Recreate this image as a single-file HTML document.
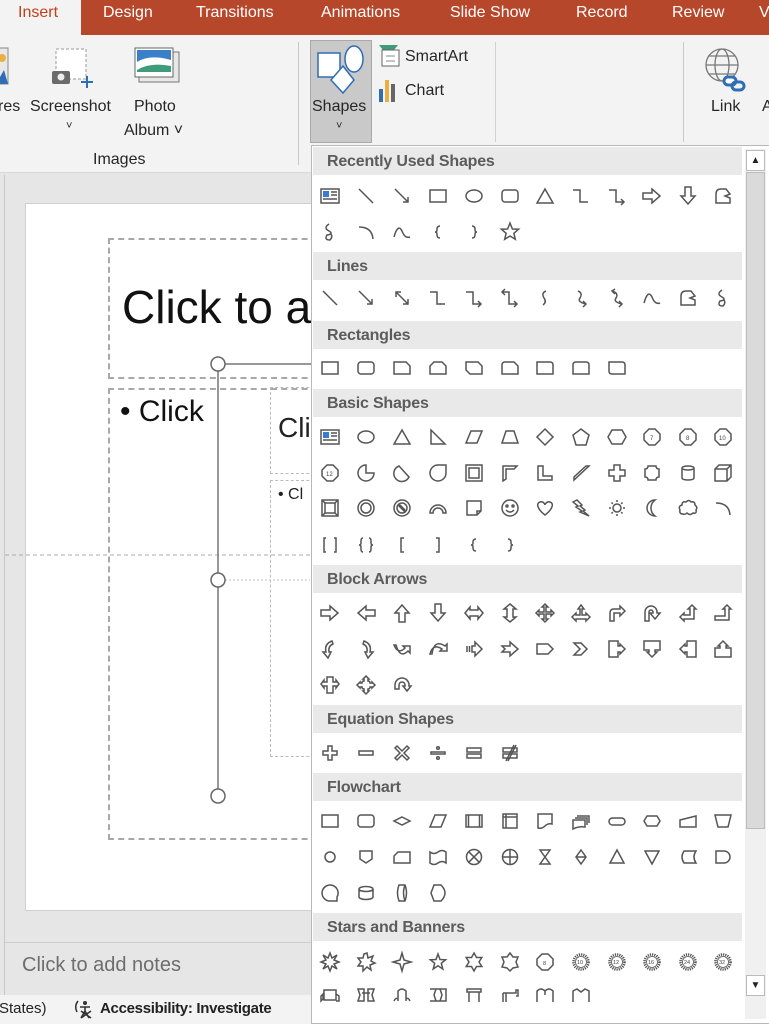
<!DOCTYPE html>
<html><head><meta charset="utf-8"><style>
*{margin:0;padding:0;box-sizing:border-box}
body{width:769px;height:1024px;overflow:hidden;position:relative;background:#e6e6e6;font-family:"Liberation Sans",sans-serif}
.a{position:absolute;white-space:nowrap}
.tab{color:#fff;font-size:16px;top:4px}
.rb{font-size:16px;color:#262626}
.hd{position:absolute;left:313px;width:429px;height:28px;background:#e9e9e9;font-weight:bold;font-size:16px;color:#5c5c5c;padding:6px 0 0 14px;letter-spacing:-0.2px}
</style></head><body>
<!-- tab bar -->
<div class="a" style="left:0;top:0;width:769px;height:35px;background:#b7472a"></div>
<div class="a" style="left:0;top:0;width:81px;height:36px;background:#f3f3f3"></div>
<div class="a" style="left:18px;top:4px;font-size:16px;color:#c43e1c">Insert</div>
<div class="a tab" style="left:103px">Design</div>
<div class="a tab" style="left:196px">Transitions</div>
<div class="a tab" style="left:321px">Animations</div>
<div class="a tab" style="left:450px">Slide Show</div>
<div class="a tab" style="left:576px">Record</div>
<div class="a tab" style="left:672px">Review</div>
<div class="a tab" style="left:759px">V</div>
<!-- ribbon -->
<div class="a" style="left:0;top:35px;width:769px;height:138px;background:#f3f3f3;border-bottom:1px solid #d8d8d8"></div>
<div class="a" style="left:298px;top:42px;width:1px;height:123px;background:#c8c8c8"></div>
<div class="a" style="left:495px;top:42px;width:1px;height:100px;background:#d0d0d0"></div>
<div class="a" style="left:683px;top:42px;width:1px;height:100px;background:#c8c8c8"></div>
<div class="a" style="left:310px;top:40px;width:62px;height:103px;background:#c9c9c9;border:1px solid #a9a9a9"></div>
<div class="a rb" style="left:-2px;top:98px">res</div>
<div class="a rb" style="left:30px;top:98px">Screenshot</div>
<div class="a rb" style="left:66px;top:120px;font-size:11px">˅</div>
<div class="a rb" style="left:134px;top:98px">Photo</div>
<div class="a rb" style="left:124px;top:122px">Album ˅</div>
<div class="a rb" style="left:93px;top:151px">Images</div>
<div class="a rb" style="left:312px;top:98px">Shapes</div>
<div class="a rb" style="left:336px;top:120px;font-size:11px">˅</div>
<div class="a rb" style="left:405px;top:48px">SmartArt</div>
<div class="a rb" style="left:405px;top:82px">Chart</div>
<div class="a rb" style="left:711px;top:98px">Link</div>
<div class="a rb" style="left:762px;top:98px">A</div>
<svg class="a" style="left:0;top:0" width="769" height="175">
 <rect x="-4" y="48" width="12" height="36" fill="#e8e8e8" stroke="#888"/><circle cx="2" cy="58" r="4" fill="#e8b040"/><path d="M-4 84 L4 70 L8 84Z" fill="#2f6db5"/>
 <rect x="56" y="49" width="30" height="30" fill="#fff" stroke="#9a9a9a" stroke-dasharray="3 2"/>
 <rect x="52" y="71" width="18" height="13" rx="2" fill="#6b6b6b"/><circle cx="61" cy="77" r="3.5" fill="#eee"/><path d="M81 82 H93 M87 76 V88" stroke="#2f6db5" stroke-width="2"/>
 <rect x="139" y="52" width="40" height="30" fill="#e8e8e8" stroke="#777"/><rect x="135" y="48" width="38" height="29" fill="#fff" stroke="#666"/><path d="M137 62 Q150 54 171 60 V50 H137Z" fill="#3a80c8"/><path d="M137 70 Q150 62 171 66 V72 H137Z" fill="#3f9b7a"/>
 <rect x="318" y="53" width="22" height="24" fill="#fff" stroke="#2f6db5" stroke-width="1.5"/><ellipse cx="354" cy="59" rx="9" ry="13" fill="#fff" stroke="#2f6db5" stroke-width="1.5"/><path d="M343 66 L354 80 L343 93 L331 80Z" fill="#fff" stroke="#2f6db5" stroke-width="1.5"/>
 <path d="M379 45 H398 L394 50 H383Z" fill="#3f9b7a"/><rect x="382" y="50" width="17" height="16" fill="#fff" stroke="#666"/><path d="M386 56 H395 M386 61 H395" stroke="#888"/>
 <rect x="379" y="89" width="4" height="13" fill="#2f6db5"/><rect x="385" y="80" width="4" height="22" fill="#e8b040"/><rect x="391" y="84" width="4" height="18" fill="#666"/>
 <circle cx="722" cy="65" r="16" fill="none" stroke="#777" stroke-width="1.3"/><ellipse cx="722" cy="65" rx="7" ry="16" fill="none" stroke="#777" stroke-width="1.3"/><path d="M706 65 H738 M709 56 H735 M709 74 H735" stroke="#777" stroke-width="1.2"/>
 <rect x="724" y="77" width="12" height="8" rx="4" fill="#fff" stroke="#2f6db5" stroke-width="3"/><rect x="732" y="82" width="12" height="8" rx="4" fill="none" stroke="#2f6db5" stroke-width="3"/>
</svg>
<!-- slide area -->
<div class="a" style="left:4px;top:175px;width:1px;height:820px;background:#c8c8c8"></div>
<div class="a" style="left:25px;top:203px;width:320px;height:708px;background:#fff;border:1px solid #cfcfcf"></div>
<div class="a" style="left:5px;top:942px;width:310px;height:1px;background:#cfcfcf"></div>
<div class="a" style="left:22px;top:954px;font-size:20px;color:#6d6d6d">Click to add notes</div>
<div class="a" style="left:108px;top:238px;width:220px;height:141px;border:2px dashed #a8a8a8"></div>
<div class="a" style="left:108px;top:388px;width:220px;height:452px;border:2px dashed #a8a8a8"></div>
<div class="a" style="left:122px;top:280px;font-size:46px;color:#111">Click to a</div>
<div class="a" style="left:120px;top:395px;font-size:30px;color:#111">• Click</div>
<div class="a" style="left:270px;top:387px;width:60px;height:87px;border:1px dashed #bbb"></div>
<div class="a" style="left:270px;top:480px;width:60px;height:277px;border:1px dashed #bbb"></div>
<div class="a" style="left:278px;top:412px;font-size:28px;color:#222">Cli</div>
<div class="a" style="left:278px;top:486px;font-size:16px;color:#222">• Cl</div>
<svg class="a" style="left:0;top:340px" width="320" height="480">
 <path d="M5 215 H310" stroke="#aaa" stroke-dasharray="4 3"/>
 <path d="M225 240 H310" stroke="#bbb" stroke-dasharray="2 2"/>
 <path d="M218 24 V456 M218 24 H312" stroke="#777" stroke-width="1.5"/>
 <circle cx="218" cy="24" r="7" fill="#fff" stroke="#666" stroke-width="1.5"/>
 <circle cx="218" cy="240" r="7" fill="#fff" stroke="#666" stroke-width="1.5"/>
 <circle cx="218" cy="456" r="7" fill="#fff" stroke="#666" stroke-width="1.5"/>
</svg>
<!-- status bar -->
<div class="a" style="left:0;top:995px;width:769px;height:29px;background:#f3f3f3"></div>
<div class="a" style="left:-1px;top:1000px;font-size:15px;color:#222">States)</div>
<div class="a" style="left:100px;top:1000px;font-size:15px;font-weight:bold;color:#222;letter-spacing:-0.3px">Accessibility: Investigate</div>
<svg class="a" style="left:72px;top:998px" width="24" height="22"><path d="M6 3 Q2 8 5 14" stroke="#333" fill="none" stroke-width="1.5"/><circle cx="13" cy="5" r="2" fill="#333"/><path d="M8 9 H18 M13 9 V13 L9 20 M13 13 L17 20 M9 13 L19 20 M19 13 L9 20" stroke="#333" stroke-width="1.6" fill="none"/></svg>
<!-- panel -->
<div class="a" style="left:311px;top:145px;width:458px;height:879px;background:#fff;border:1px solid #b8b8b8;border-right:none"></div>
<div class="a" style="left:745px;top:149px;width:21px;height:870px;background:#f0f0f0"></div>
<div class="a" style="left:746px;top:150px;width:19px;height:21px;background:#fff;border:1px solid #bbb;font-size:10px;text-align:center;line-height:19px;color:#222">▲</div>
<div class="a" style="left:746px;top:172px;width:19px;height:657px;background:#dadada;border:1px solid #bcbcbc"></div>
<div class="a" style="left:746px;top:975px;width:19px;height:21px;background:#fff;border:1px solid #bbb;font-size:10px;text-align:center;line-height:19px;color:#222">▼</div>
<div class="hd" style="top:147px">Recently Used Shapes</div>
<div class="hd" style="top:252px">Lines</div>
<div class="hd" style="top:321px">Rectangles</div>
<div class="hd" style="top:389px">Basic Shapes</div>
<div class="hd" style="top:565px">Block Arrows</div>
<div class="hd" style="top:705px">Equation Shapes</div>
<div class="hd" style="top:773px">Flowchart</div>
<div class="hd" style="top:913px">Stars and Banners</div>
<svg class="a" style="left:0;top:0" width="769" height="1024">
<defs>
<g id="tb"><rect x="1" y="3" width="18" height="14"/><rect x="3" y="5" width="6" height="6" fill="#3a7bd5" stroke="none"/><path d="M11 6 H17 M11 9 H17 M3 13 H17"/></g>
<g id="ln"><path d="M3 3 L17 17"/></g>
<g id="la"><path d="M3 3 L16 16 M16 11 V16 H11"/></g>
<g id="lda"><path d="M4 4 L16 16 M4 9 V4 H9 M16 11 V16 H11"/></g>
<g id="rc"><rect x="2" y="4" width="16" height="12"/></g>
<g id="el"><ellipse cx="10" cy="10" rx="8" ry="6"/></g>
<g id="rr"><rect x="2" y="4" width="16" height="12" rx="3"/></g>
<g id="tr"><path d="M10 3 L18 17 H2Z"/></g>
<g id="elb"><path d="M2 4 H9 V16 H17"/></g>
<g id="elba"><path d="M2 4 H9 V16 H17 M14 13 L17 16 L14 19"/></g>
<g id="elbda"><path d="M2 4 H9 V16 H17 M14 13 L17 16 L14 19 M5 1 L2 4 L5 7"/></g>
<g id="sc"><path d="M11 3 Q6 5 9 10 Q12 14 8 17"/></g>
<g id="sca"><path d="M7 3 Q12 5 9 10 Q6 14 15 16 M12 13 L15 16 L12 19"/></g>
<g id="scda"><path d="M5 3 Q12 5 9 10 Q6 14 15 16 M12 13 L15 16 L12 19 M8 1 L5 3 L8 6"/></g>
<g id="cv"><path d="M2 15 Q6 1 10 9 Q13 17 18 15"/></g>
<g id="fr"><path d="M3 17 V8 Q3 3 8 3 H13 L17 8 L12 10 L17 12 V17Z"/></g>
<g id="scr"><path d="M9 2 Q3 6 9 9 Q14 12 7 13 Q4 18 10 18 Q13 15 11 12"/></g>
<g id="arc"><path d="M3 5 Q16 5 17 17"/></g>
<g id="lbr"><path d="M12 4 Q9 4 9 7 V8 Q9 10 7 10 Q9 10 9 12 V13 Q9 16 12 16"/></g>
<g id="rbr"><path d="M8 4 Q11 4 11 7 V8 Q11 10 13 10 Q11 10 11 12 V13 Q11 16 8 16"/></g>
<g id="st"><path d="M10 1 L12.4 7 L18.6 7.2 L13.9 11.3 L15.3 17.3 L10 14 L4.7 17.3 L6.1 11.3 L1.4 7.2 L7.6 7Z"/></g>
<g id="sn1"><path d="M2 4 H14 L18 8 V16 H2Z"/></g>
<g id="sn2"><path d="M6 4 H14 L18 8 V16 H2 V8Z"/></g>
<g id="snd"><path d="M2 4 H14 L18 8 V16 H6 L2 12Z"/></g>
<g id="snr"><path d="M2 7 Q2 4 5 4 H14 L18 8 V16 H2Z"/></g>
<g id="rn1"><path d="M2 4 H15 Q18 4 18 7 V16 H2Z"/></g>
<g id="rn2"><path d="M2 7 Q2 4 5 4 H15 Q18 4 18 7 V16 H2Z"/></g>
<g id="rnd"><path d="M2 4 H15 Q18 4 18 7 V16 H5 Q2 16 2 13Z"/></g>
<g id="rtr"><path d="M3 3 V17 H17Z"/></g>
<g id="par"><path d="M7 4 H18 L13 16 H2Z"/></g>
<g id="trp"><path d="M6 4 H14 L18 16 H2Z"/></g>
<g id="dia"><path d="M10 2 L18 10 L10 18 L2 10Z"/></g>
<g id="pen"><path d="M10 2 L18 8 L15 18 H5 L2 8Z"/></g>
<g id="hex"><path d="M5 3 H15 L19 10 L15 17 H5 L1 10Z"/></g>
<g id="oct"><path d="M7 2 H13 L18 7 V13 L13 18 H7 L2 13 V7Z"/></g>
<g id="pie"><path d="M10 10 H18 A8 8 0 1 1 10 2Z"/></g>
<g id="tear"><path d="M10 2 H18 V10 A8 8 0 1 1 10 2Z"/></g>
<g id="chd"><path d="M7 3 A8 8 0 1 0 17 14Z"/></g>
<g id="frm"><rect x="2" y="2" width="16" height="16"/><rect x="5" y="5" width="10" height="10"/></g>
<g id="hfr"><path d="M3 3 H17 L14 6 H6 V16 L3 18Z"/></g>
<g id="ls"><path d="M3 3 H8 V13 H17 V17 H3Z"/></g>
<g id="dst"><path d="M3 17 V14 L15 3 H18 Z"/></g>
<g id="pls"><path d="M7 2 H13 V7 H18 V13 H13 V18 H7 V13 H2 V7 H7Z"/></g>
<g id="plq"><path d="M6 3 H14 Q14 6 17 6 V14 Q14 14 14 17 H6 Q6 14 3 14 V6 Q6 6 6 3Z"/></g>
<g id="can"><path d="M4 5 A6 2 0 0 1 16 5 V15 A6 2 0 0 1 4 15Z M4 5 A6 2 0 0 0 16 5"/></g>
<g id="cub"><path d="M2 6 L6 2 H18 V14 L14 18 H2Z M2 6 H14 V18 M14 6 L18 2"/></g>
<g id="bev"><rect x="2" y="2" width="16" height="16"/><rect x="5" y="5" width="10" height="10"/><path d="M2 2 L5 5 M18 2 L15 5 M2 18 L5 15 M18 18 L15 15"/></g>
<g id="dnt"><circle cx="10" cy="10" r="8"/><circle cx="10" cy="10" r="5"/></g>
<g id="nos"><circle cx="10" cy="10" r="8"/><circle cx="10" cy="10" r="5"/><path d="M6.5 7.5 L12.5 13.5 M7.5 6.5 L13.5 12.5"/></g>
<g id="bar"><path d="M2 15 A8 8 0 0 1 18 15 H15 A5 5 0 0 0 5 15Z"/></g>
<g id="fld"><path d="M3 3 H17 V13 L13 17 H3Z M13 17 V13 H17"/></g>
<g id="smy"><circle cx="10" cy="10" r="8"/><circle cx="7" cy="8" r="1"/><circle cx="13" cy="8" r="1"/><path d="M6 12 Q10 16 14 12"/></g>
<g id="hrt"><path d="M10 17 C2 11 1 5 5 4 C8 3 10 6 10 7 C10 6 12 3 15 4 C19 5 18 11 10 17Z"/></g>
<g id="blt"><path d="M6 2 L11 7 L9 8 L14 12 L12 13 L18 18 L9 14 L11 13 L5 9 L7 8 L2 4Z"/></g>
<g id="sun"><circle cx="10" cy="10" r="4"/><path d="M10 2 V4 M10 16 V18 M2 10 H4 M16 10 H18 M4.5 4.5 L5.8 5.8 M14.2 14.2 L15.5 15.5 M4.5 15.5 L5.8 14.2 M14.2 5.8 L15.5 4.5"/></g>
<g id="mon"><path d="M13 2 A8 8 0 1 0 13 18 A10 10 0 0 1 13 2Z"/></g>
<g id="cld"><path d="M5 16 Q1 16 2 12 Q0 8 4 7 Q4 3 8 4 Q11 1 13 4 Q17 3 17 7 Q20 9 18 12 Q19 16 15 15 Q12 18 9 15 Q7 17 5 16Z"/></g>
<g id="dbk"><path d="M6 3 H4 V17 H6 M14 3 H16 V17 H14"/></g>
<g id="dbc"><path d="M7 3 Q5 3 5 6 V8 Q5 10 3 10 Q5 10 5 12 V14 Q5 17 7 17 M13 3 Q15 3 15 6 V8 Q15 10 17 10 Q15 10 15 12 V14 Q15 17 13 17"/></g>
<g id="lbk"><path d="M12 3 H9 V17 H12"/></g>
<g id="rbk"><path d="M8 3 H11 V17 H8"/></g>
<g id="ar"><path d="M1 7 H10 V3 L18 10 L10 17 V13 H1Z"/></g>
<g id="al"><path d="M19 7 H10 V3 L2 10 L10 17 V13 H19Z"/></g>
<g id="au"><path d="M7 19 V10 H3 L10 2 L17 10 H13 V19Z"/></g>
<g id="ad"><path d="M7 1 V10 H3 L10 18 L17 10 H13 V1Z"/></g>
<g id="alr"><path d="M1 10 L6 4 V7 H14 V4 L19 10 L14 16 V13 H6 V16Z"/></g>
<g id="aud"><path d="M10 1 L16 6 H13 V14 H16 L10 19 L4 14 H7 V6 H4Z"/></g>
<g id="aq"><path d="M10 1 L13 4 H11 V9 H16 V7 L19 10 L16 13 V11 H11 V16 H13 L10 19 L7 16 H9 V11 H4 V13 L1 10 L4 7 V9 H9 V4 H7Z"/></g>
<g id="alru"><path d="M10 2 L13 6 H11 V12 H15 V10 L19 14 L15 18 V16 H5 V18 L1 14 L5 10 V12 H9 V6 H7Z"/></g>
<g id="abn"><path d="M3 18 V10 Q3 6 7 6 H13 V3 L18 8 L13 13 V10 H7 V18Z"/></g>
<g id="aut"><path d="M3 18 V9 A6 6 0 0 1 15 9 V10 H18 L13 16 L8 10 H11 V9 A2 2 0 0 0 7 9 V18Z"/></g>
<g id="alu"><path d="M2 14 L6 10 V12 H12 V6 H10 L14 2 L18 6 H16 V16 H6 V18Z"/></g>
<g id="abu"><path d="M2 13 H12 V6 H10 L14 2 L18 6 H16 V17 H2Z"/></g>
<g id="acr"><path d="M12 2 Q4 5 6 13 L3 13 L8 19 L11 13 L9 13 Q8 7 13 5Z"/></g>
<g id="acl"><path d="M8 2 Q16 5 14 13 L17 13 L12 19 L9 13 L11 13 Q12 7 7 5Z"/></g>
<g id="acu"><path d="M2 6 Q6 16 13 9 L11 7 H18 V14 L16 12 Q8 20 4 6Z"/></g>
<g id="acd"><path d="M2 15 Q5 4 14 10 L12 12 H19 V5 L17 7 Q6 0 4 15Z"/></g>
<g id="ast"><path d="M8 7 H11 V3 L18 10 L11 17 V13 H8Z M3 7 V13 M5.5 7 V13"/></g>
<g id="ant"><path d="M2 7 H10 V3 L18 10 L10 17 V13 H2 L5 10Z"/></g>
<g id="ahp"><path d="M2 5 H13 L18 10 L13 15 H2Z"/></g>
<g id="chv"><path d="M3 4 H10 L16 10 L10 16 H3 L9 10Z"/></g>
<g id="crc"><path d="M2 2 H11 V7 H13 V5 L18 10 L13 15 V13 H11 V18 H2Z"/></g>
<g id="cdc"><path d="M2 2 H18 V11 H13 V13 H15 L10 18 L5 13 H7 V11 H2Z"/></g>
<g id="clc"><path d="M18 2 H9 V7 H7 V5 L2 10 L7 15 V13 H9 V18 H18Z"/></g>
<g id="cuc"><path d="M2 18 H18 V9 H13 V7 H15 L10 2 L5 7 H7 V9 H2Z"/></g>
<g id="clr"><path d="M7 2 H13 V7 H16 V5 L19 9 L16 13 V11 H13 V18 H7 V11 H4 V13 L1 9 L4 5 V7 H7Z"/></g>
<g id="cqd"><path d="M10 1 L13 4 H12 V6 Q14 6 14 8 H16 V7 L19 10 L16 13 V12 H14 Q14 14 12 14 V16 H13 L10 19 L7 16 H8 V14 Q6 14 6 12 H4 V13 L1 10 L4 7 V8 H6 Q6 6 8 6 V4 H7Z"/></g>
<g id="acc"><path d="M3 14 V10 A7 7 0 0 1 17 10 V11 H19 L15 16 L11 11 H13 V10 A3 3 0 0 0 7 10 V14Z"/></g>
<g id="epl"><path d="M8 3 H12 V8 H17 V12 H12 V17 H8 V12 H3 V8 H8Z"/></g>
<g id="emi"><rect x="3" y="8" width="14" height="4"/></g>
<g id="emu"><path d="M5 3 L10 8 L15 3 L17 5 L12 10 L17 15 L15 17 L10 12 L5 17 L3 15 L8 10 L3 5Z"/></g>
<g id="edv"><rect x="3" y="9" width="14" height="2"/><circle cx="10" cy="5" r="1.3"/><circle cx="10" cy="15" r="1.3"/></g>
<g id="eeq"><rect x="3" y="5" width="14" height="4"/><rect x="3" y="11" width="14" height="4"/></g>
<g id="ene"><rect x="3" y="5" width="14" height="4"/><rect x="3" y="11" width="14" height="4"/><path d="M14 2 L6 18 M16 2 L8 18"/></g>
<g id="fpr"><rect x="2" y="4" width="16" height="12"/></g>
<g id="fde"><path d="M10 6 L18 10 L10 14 L2 10Z"/></g>
<g id="fpd"><rect x="2" y="4" width="16" height="12"/><path d="M4.5 4 V16 M15.5 4 V16"/></g>
<g id="fis"><rect x="3" y="3" width="14" height="14"/><path d="M3 6 H17 M6 3 V17"/></g>
<g id="fdc"><path d="M3 3 H17 V13 Q13 12 10 15 Q7 18 3 17Z"/></g>
<g id="fmd"><path d="M6 5 H18 V12 M4 7 H16 V14 M2 9 H14 V16 Q8 15 2 18Z"/></g>
<g id="ftm"><rect x="2" y="7" width="16" height="7" rx="3.5"/></g>
<g id="fpp"><path d="M5 5 H15 L18 10 L15 15 H5 L2 10Z"/></g>
<g id="fmi"><path d="M2 9 L18 5 V16 H2Z"/></g>
<g id="fmo"><path d="M2 4 H18 L15 16 H5Z"/></g>
<g id="fcn"><circle cx="10" cy="10" r="5"/></g>
<g id="fop"><path d="M4 4 H16 V12 L10 16 L4 12Z"/></g>
<g id="fcd"><path d="M6 5 H18 V16 H2 V9Z"/></g>
<g id="fpt"><path d="M2 5 Q6 8 10 5 Q14 2 18 5 V16 Q14 13 10 16 Q6 19 2 16Z"/></g>
<g id="fsj"><circle cx="10" cy="10" r="7.5"/><path d="M4.7 4.7 L15.3 15.3 M15.3 4.7 L4.7 15.3"/></g>
<g id="for"><circle cx="10" cy="10" r="7.5"/><path d="M2.5 10 H17.5 M10 2.5 V17.5"/></g>
<g id="fcl"><path d="M5 3 H15 L5 17 H15Z"/></g>
<g id="fst"><path d="M10 3 L15 10 L10 17 L5 10Z M5 10 H15"/></g>
<g id="fex"><path d="M10 3 L17 16 H3Z"/></g>
<g id="fmg"><path d="M3 4 H17 L10 17Z"/></g>
<g id="fsd"><path d="M6 4 H18 Q14 10 18 16 H6 Q2 10 6 4Z"/></g>
<g id="fdl"><path d="M3 4 H11 A6 6 0 0 1 11 16 H3Z"/></g>
<g id="fsa"><path d="M10 18 A8 8 0 1 1 17 14 V18Z"/></g>
<g id="fmk"><path d="M3 6 A7 2.5 0 0 1 17 6 V14 A7 2.5 0 0 1 3 14Z M3 6 A7 2.5 0 0 0 17 6"/></g>
<g id="fda"><path d="M7 2 H13 Q16 10 13 18 H7 Q4 10 7 2Z M13 2 Q10 10 13 18"/></g>
<g id="fds"><path d="M6 2 H13 Q17 6 17 10 Q17 14 13 18 H6 L3 10Z"/></g>
<g id="sx1"><path d="M10 1 L12 6 L17 3 L14 8 L19 10 L14 12 L17 17 L12 14 L10 19 L8 14 L3 17 L6 12 L1 10 L6 8 L3 3 L8 6Z"/></g>
<g id="sx2"><path d="M11 1 L12 6 L17 4 L15 9 L19 11 L14 13 L15 18 L11 15 L7 19 L7 14 L2 14 L5 10 L2 6 L7 6 L8 2Z"/></g>
<g id="s4"><path d="M10 1 L12 8 L19 10 L12 12 L10 19 L8 12 L1 10 L8 8Z"/></g>
<g id="s5"><path d="M10 2 L12 7.5 L17.6 7.8 L13.3 11.3 L14.8 17 L10 13.8 L5.2 17 L6.7 11.3 L2.4 7.8 L8 7.5Z"/></g>
<g id="s6"><path d="M10 1 L12.5 5.5 L17.8 5.5 L15 10 L17.8 14.5 L12.5 14.5 L10 19 L7.5 14.5 L2.2 14.5 L5 10 L2.2 5.5 L7.5 5.5Z"/></g>
<g id="s7"><path d="M10 1 L13 5 L18 5 L16 10 L18 15 L13 16 L10 19 L7 16 L2 15 L4 10 L2 5 L7 5Z"/></g>
<g id="sl"><circle cx="10" cy="10" r="7.5" stroke-width="2.6" stroke-dasharray="1.2 1"/><circle cx="10" cy="10" r="5.5" stroke-width="0.8"/></g>
<g id="bn1"><path d="M1 16 V11 L3 9 V14 Z M4 5 H16 V15 H4Z M16 9 L19 11 V16 H16"/></g>
<g id="bn2"><path d="M2 4 H8 V16 H2 L4 10Z M12 4 H18 L16 10 L18 16 H12Z M6 8 H14"/></g>
<g id="bn3"><path d="M6 16 V6 Q10 2 14 6 V16 M2 16 Q4 12 6 14 M14 14 Q16 12 18 16"/></g>
<g id="bn4"><path d="M2 4 H8 L6 10 L8 16 H2 M12 4 H18 V16 H12 L14 10Z M8 4 H12 M8 16 H12"/></g>
<g id="bn5"><path d="M3 4 H17 V7 H3Z M5 7 V17 M15 7 V17"/></g>
<g id="bn6"><path d="M3 8 H16 V5 H18 V11 H16 M3 8 V17 M6 8 V17"/></g>
<g id="bn7"><path d="M2 17 V6 Q6 2 10 6 Q14 2 18 6 V17 M10 6 V10"/></g>
<g id="bn8"><path d="M2 17 V6 L6 4 L10 7 L14 4 L18 6 V17"/></g>
</defs>
<g stroke="#555" fill="none" stroke-width="1.5" font-family="Liberation Sans" font-size="6">
<use href="#tb" x="320" y="186"/><use href="#ln" x="356" y="186"/><use href="#la" x="392" y="186"/><use href="#rc" x="428" y="186"/><use href="#el" x="464" y="186"/><use href="#rr" x="500" y="186"/><use href="#tr" x="535" y="186"/><use href="#elb" x="571" y="186"/><use href="#elba" x="607" y="186"/><use href="#ar" x="642" y="186"/><use href="#ad" x="678" y="186"/><use href="#fr" x="713" y="186"/>
<use href="#scr" x="320" y="222"/><use href="#arc" x="356" y="222"/><use href="#cv" x="392" y="222"/><use href="#lbr" x="428" y="222"/><use href="#rbr" x="464" y="222"/><use href="#st" x="500" y="222"/>
<use href="#ln" x="320" y="288"/><use href="#la" x="356" y="288"/><use href="#lda" x="392" y="288"/><use href="#elb" x="428" y="288"/><use href="#elba" x="464" y="288"/><use href="#elbda" x="500" y="288"/><use href="#sc" x="535" y="288"/><use href="#sca" x="571" y="288"/><use href="#scda" x="607" y="288"/><use href="#cv" x="642" y="288"/><use href="#fr" x="678" y="288"/><use href="#scr" x="713" y="288"/>
<use href="#rc" x="320" y="358"/><use href="#rr" x="356" y="358"/><use href="#sn1" x="392" y="358"/><use href="#sn2" x="428" y="358"/><use href="#snd" x="464" y="358"/><use href="#snr" x="500" y="358"/><use href="#rn1" x="535" y="358"/><use href="#rn2" x="571" y="358"/><use href="#rnd" x="607" y="358"/>
<use href="#tb" x="320" y="427"/><use href="#el" x="356" y="427"/><use href="#tr" x="392" y="427"/><use href="#rtr" x="428" y="427"/><use href="#par" x="464" y="427"/><use href="#trp" x="500" y="427"/><use href="#dia" x="535" y="427"/><use href="#pen" x="571" y="427"/><use href="#hex" x="607" y="427"/><use href="#oct" x="642" y="427"/><use href="#oct" x="678" y="427"/><use href="#oct" x="713" y="427"/>
<text x="650" y="440" stroke="none" fill="#444">7</text><text x="686" y="440" stroke="none" fill="#444">8</text><text x="719" y="440" stroke="none" fill="#444">10</text>
<use href="#oct" x="320" y="463"/><text x="326" y="476" stroke="none" fill="#444">12</text><use href="#pie" x="356" y="463"/><use href="#chd" x="392" y="463"/><use href="#tear" x="428" y="463"/><use href="#frm" x="464" y="463"/><use href="#hfr" x="500" y="463"/><use href="#ls" x="535" y="463"/><use href="#dst" x="571" y="463"/><use href="#pls" x="607" y="463"/><use href="#plq" x="642" y="463"/><use href="#can" x="678" y="463"/><use href="#cub" x="713" y="463"/>
<use href="#bev" x="320" y="498"/><use href="#dnt" x="356" y="498"/><use href="#nos" x="392" y="498"/><use href="#bar" x="428" y="498"/><use href="#fld" x="464" y="498"/><use href="#smy" x="500" y="498"/><use href="#hrt" x="535" y="498"/><use href="#blt" x="571" y="498"/><use href="#sun" x="607" y="498"/><use href="#mon" x="642" y="498"/><use href="#cld" x="678" y="498"/><use href="#arc" x="713" y="498"/>
<use href="#dbk" x="320" y="535"/><use href="#dbc" x="356" y="535"/><use href="#lbk" x="392" y="535"/><use href="#rbk" x="428" y="535"/><use href="#lbr" x="464" y="535"/><use href="#rbr" x="500" y="535"/>
<use href="#ar" x="320" y="603"/><use href="#al" x="356" y="603"/><use href="#au" x="392" y="603"/><use href="#ad" x="428" y="603"/><use href="#alr" x="464" y="603"/><use href="#aud" x="500" y="603"/><use href="#aq" x="535" y="603"/><use href="#alru" x="571" y="603"/><use href="#abn" x="607" y="603"/><use href="#aut" x="642" y="603"/><use href="#alu" x="678" y="603"/><use href="#abu" x="713" y="603"/>
<use href="#acr" x="320" y="639"/><use href="#acl" x="356" y="639"/><use href="#acu" x="392" y="639"/><use href="#acd" x="428" y="639"/><use href="#ast" x="464" y="639"/><use href="#ant" x="500" y="639"/><use href="#ahp" x="535" y="639"/><use href="#chv" x="571" y="639"/><use href="#crc" x="607" y="639"/><use href="#cdc" x="642" y="639"/><use href="#clc" x="678" y="639"/><use href="#cuc" x="713" y="639"/>
<use href="#clr" x="320" y="675"/><use href="#cqd" x="356" y="675"/><use href="#acc" x="392" y="675"/>
<use href="#epl" x="320" y="743"/><use href="#emi" x="356" y="743"/><use href="#emu" x="392" y="743"/><use href="#edv" x="428" y="743"/><use href="#eeq" x="464" y="743"/><use href="#ene" x="500" y="743"/>
<use href="#fpr" x="320" y="811"/><use href="#rr" x="356" y="811"/><use href="#fde" x="392" y="811"/><use href="#par" x="428" y="811"/><use href="#fpd" x="464" y="811"/><use href="#fis" x="500" y="811"/><use href="#fdc" x="535" y="811"/><use href="#fmd" x="571" y="811"/><use href="#ftm" x="607" y="811"/><use href="#fpp" x="642" y="811"/><use href="#fmi" x="678" y="811"/><use href="#fmo" x="713" y="811"/>
<use href="#fcn" x="320" y="847"/><use href="#fop" x="356" y="847"/><use href="#fcd" x="392" y="847"/><use href="#fpt" x="428" y="847"/><use href="#fsj" x="464" y="847"/><use href="#for" x="500" y="847"/><use href="#fcl" x="535" y="847"/><use href="#fst" x="571" y="847"/><use href="#fex" x="607" y="847"/><use href="#fmg" x="642" y="847"/><use href="#fsd" x="678" y="847"/><use href="#fdl" x="713" y="847"/>
<use href="#fsa" x="320" y="883"/><use href="#fmk" x="356" y="883"/><use href="#fda" x="392" y="883"/><use href="#fds" x="428" y="883"/>
<use href="#sx1" x="320" y="952"/><use href="#sx2" x="356" y="952"/><use href="#s4" x="392" y="952"/><use href="#s5" x="428" y="952"/><use href="#s6" x="464" y="952"/><use href="#s7" x="500" y="952"/><use href="#oct" x="535" y="952"/><use href="#sl" x="571" y="952"/><use href="#sl" x="607" y="952"/><use href="#sl" x="642" y="952"/><use href="#sl" x="678" y="952"/><use href="#sl" x="713" y="952"/>
<g stroke="none" fill="#444" font-size="5.5"><text x="543" y="965">8</text><text x="577" y="964">10</text><text x="613" y="964">12</text><text x="648" y="964">16</text><text x="684" y="964">24</text><text x="719" y="964">32</text></g>
<use href="#bn1" x="320" y="985"/><use href="#bn2" x="356" y="985"/><use href="#bn3" x="392" y="985"/><use href="#bn4" x="428" y="985"/><use href="#bn5" x="464" y="985"/><use href="#bn6" x="500" y="985"/><use href="#bn7" x="535" y="985"/><use href="#bn8" x="571" y="985"/>
</g>
</svg>
</body></html>
